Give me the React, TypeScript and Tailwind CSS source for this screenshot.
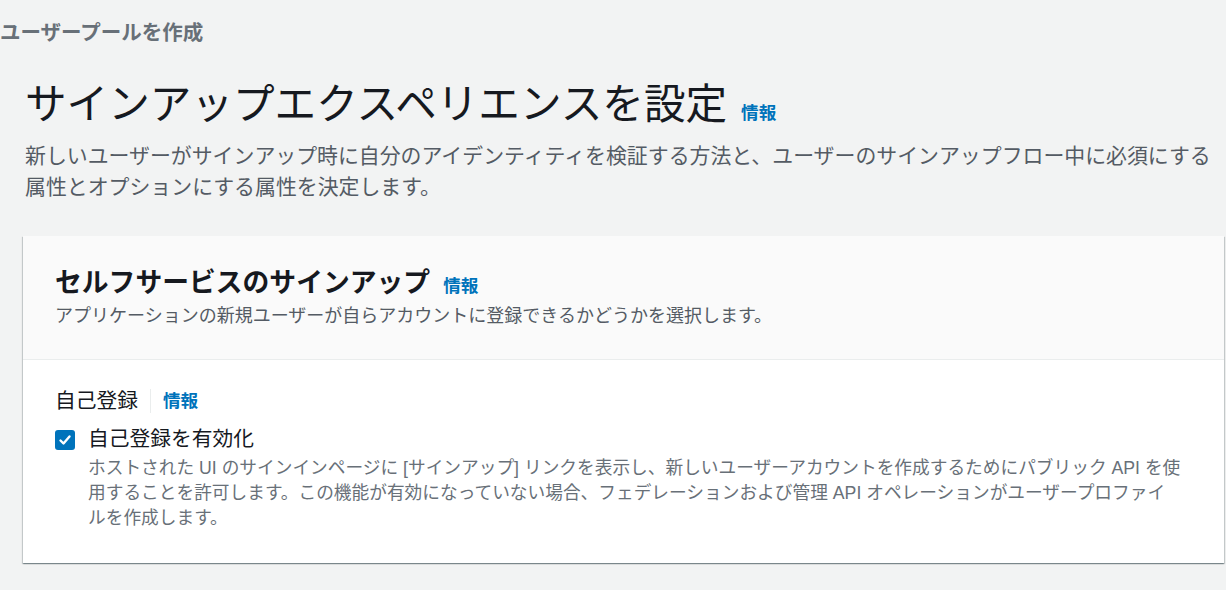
const font = {
  fontFamily: '"Liberation Sans", "Noto Sans CJK JP", sans-serif',
};

function InfoLink({ className = '' }: { className?: string }) {
  return (
    <a
      href="#"
      className={`font-bold text-[#0073bb] text-[17.6px] leading-[24px] ${className}`}
    >
      情報
    </a>
  );
}

export default function App() {
  return (
    <div className="min-h-[590px] w-[1226px] bg-[#f2f3f3] pt-[19px]" style={font}>
      <div className="text-[20.5px] leading-[28px] font-bold text-[#687078]">
        ユーザープールを作成
      </div>

      <div className="mt-[33px] pl-[25px]">
        <div className="flex items-baseline gap-[14px]">
          <h1 className="text-[41.6px] leading-[50px] font-normal text-[#16191f]">
            サインアップエクスペリエンスを設定
          </h1>
          <InfoLink />
        </div>
        <p className="mt-[10px] text-[20.9px] leading-[31px] text-[#545b64]">
          新しいユーザーがサインアップ時に自分のアイデンティティを検証する方法と、ユーザーのサインアップフロー中に必須にする
          <br />
          属性とオプションにする属性を決定します。
        </p>
      </div>

      <section className="mt-[34px] ml-[23px] mr-[2px] bg-white shadow-[0_1px_1px_0_rgba(0,28,36,0.3),1px_1px_1px_0_rgba(0,28,36,0.15),-1px_1px_1px_0_rgba(0,28,36,0.15)]">
        <header className="bg-[#fafafa] border-b border-[#eaeded] px-[32px] pt-[30px] pb-[30px]">
          <div className="flex items-baseline gap-[13px]">
            <h2 className="text-[26.8px] leading-[34px] font-bold text-[#16191f]">
              セルフサービスのサインアップ
            </h2>
            <InfoLink />
          </div>
          <p className="mt-[4px] text-[18px] leading-[25px] text-[#545b64]">
            アプリケーションの新規ユーザーが自らアカウントに登録できるかどうかを選択します。
          </p>
        </header>

        <div className="px-[32px] pt-[27px] pb-[32px]">
          <div className="flex items-center">
            <span className="text-[20.75px] leading-[28px] text-[#16191f]">自己登録</span>
            <span className="mx-[12px] h-[24px] w-px bg-[#eaeded]" />
            <InfoLink />
          </div>

          <label className="mt-[10px] flex items-start gap-[13px]">
            <span className="mt-[5px] flex h-[20px] w-[20px] shrink-0 items-center justify-center rounded-[3px] bg-[#0073bb]">
              <svg viewBox="0 0 14 14" className="h-[14px] w-[14px]" fill="none">
                <path
                  d="M2.5 7.5 5.5 10.5 11.5 3.5"
                  stroke="white"
                  strokeWidth="2.4"
                  strokeLinecap="round"
                  strokeLinejoin="round"
                />
              </svg>
            </span>
            <span className="flex-1">
              <span className="block text-[20.75px] leading-[28px] text-[#16191f]">
                自己登録を有効化
              </span>
              <span className="mt-[3px] block text-[17.7px] leading-[25px] text-[#687078]">
                ホストされた UI のサインインページに [サインアップ] リンクを表示し、新しいユーザーアカウントを作成するためにパブリック API を使
                <br />
                用することを許可します。この機能が有効になっていない場合、フェデレーションおよび管理 API オペレーションがユーザープロファイ
                <br />
                ルを作成します。
              </span>
            </span>
          </label>
        </div>
      </section>
    </div>
  );
}
